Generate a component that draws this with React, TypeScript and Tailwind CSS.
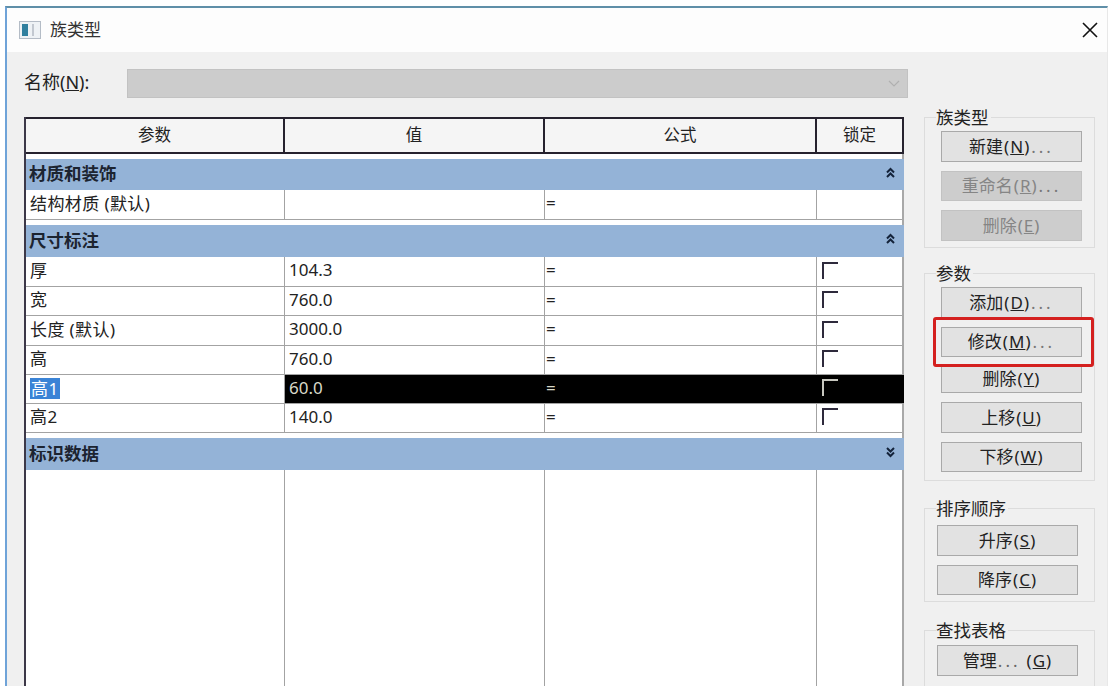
import React from "react";

const font = { fontFamily: '"Noto Sans", "Noto Sans CJK SC", sans-serif' };

const Shortcut = ({ k }: { k: string }) => (
  <span className="tracking-[1px] ml-[1px]">
    (<u>{k}</u>)
  </span>
);

const DialogButton = ({
  label,
  k,
  dots,
  disabled,
  dotsFirst,
  className = "h-[30.5px]",
}: {
  label: string;
  k: string;
  dots?: boolean;
  disabled?: boolean;
  dotsFirst?: boolean;
  className?: string;
}) => (
  <div
    className={`${className} flex items-center justify-center border text-[17px] leading-none ${
      disabled
        ? "bg-[#cdcdcd] border-[#c2c2c2] text-[#858585]"
        : "bg-[#e2e2e2] border-[#a9a9a9] text-[#222222]"
    }`}
  >
    {label}
    {dotsFirst && <span className="tracking-[3px] text-[#666666] ml-[1px] mr-[5px]">...</span>}
    <Shortcut k={k} />
    {dots && <span className="tracking-[3px] text-[#777777] ml-[1px]">...</span>}
  </div>
);

const GroupBox = ({
  title,
  className,
  children,
}: {
  title: string;
  className: string;
  children: React.ReactNode;
}) => (
  <div className={`border border-[#dcdcdc] ${className}`}>
    <div className="-mt-[10px] ml-[11px] w-fit bg-[#f0f0f0] pr-[2px] text-[17.5px] leading-[18px] text-[#222222]">
      {title}
    </div>
    {children}
  </div>
);

const Chevrons = ({ down }: { down?: boolean }) => (
  <svg width="9" height="12" viewBox="0 0 9 12" className={down ? "rotate-180" : ""}>
    <path d="M1 5.5 4.5 2 8 5.5M1 10 4.5 6.5 8 10" fill="none" stroke="#14233a" strokeWidth="2" />
  </svg>
);

const GroupRow = ({ title, down, h }: { title: string; down?: boolean; h: string }) => (
  <div className={`${h} -mr-[2px] bg-[#94b3d7] flex items-center justify-between pl-[3px] pr-[9px]`}>
    <span className="text-[17.5px] font-bold text-[#1c2430] pb-[2px]">{title}</span>
    <span className="pb-[4px]">
      <Chevrons down={down} />
    </span>
  </div>
);

const Row = ({
  name,
  value,
  lock,
  selected,
  height,
}: {
  name: string;
  value: string;
  lock?: boolean;
  selected?: boolean;
  height: string;
}) => (
  <div
    className={`${height} grid grid-cols-[259px_260px_272px_1fr] grid-rows-[minmax(0,1fr)] border-b border-[#a3a3a3] text-[17px] leading-[20px] text-[#222222] ${
      selected ? "-mr-[2px]" : ""
    }`}
  >
    <div className="flex items-center pl-[4px] pb-[2px] tracking-[0.4px] border-r border-[#a3a3a3] bg-white">
      {selected ? <span className="bg-[#3a83d6] text-white h-[21px] leading-[21px] px-[1px]">{name}</span> : name}
    </div>
    <div
      className={`flex items-center pl-[4px] pb-[3px] border-r ${
        selected ? "bg-black text-[#d8d8c8] border-black" : "bg-white border-[#a3a3a3]"
      }`}
    >
      {value}
    </div>
    <div
      className={`flex items-center pl-[1px] pb-[3px] border-r ${
        selected ? "bg-black text-[#d8d8c8] border-black" : "bg-white border-[#a3a3a3]"
      }`}
    >
      =
    </div>
    <div className={`flex items-center pl-[5px] pb-[3px] ${selected ? "bg-black" : "bg-white"}`}>
      {lock && (
        <div className={`w-[16px] h-[17px] border-l-2 border-t-2 ${selected ? "border-[#c8c8c0]" : "border-[#2e2a3c]"}`} />
      )}
    </div>
  </div>
);

const HeaderCell = ({ text, last }: { text: string; last?: boolean }) => (
  <div className={`flex items-center justify-center ${last ? "" : "border-r-2 border-[#26222e]"}`}>{text}</div>
);

export default function App() {
  return (
    <div className="w-[1110px] h-[686px] overflow-hidden bg-white pt-[6px] pl-[5px] pr-[2px]" style={font}>
      <div className="h-[700px] border-l-2 border-t-2 border-l-[#6fa3d8] border-t-[#5f8fa8] border-r border-r-[#e8e8e8] bg-[#f0f0f0]">
        {/* title bar */}
        <div className="h-[44px] bg-[#fdfdfd] flex items-center pl-[12px] pr-[9px]">
          <svg width="22" height="18" viewBox="0 0 22 18">
            <rect x="0.5" y="0.5" width="21" height="17" fill="#eef2f5" stroke="#b4bcc6" />
            <rect x="3" y="3" width="6" height="12" fill="#2f7f9e" />
            <path d="M14 3v12" stroke="#c2c8d0" strokeWidth="2" />
          </svg>
          <span className="ml-[9px] text-[17px] text-[#333333]">族类型</span>
          <svg width="16" height="16" viewBox="0 0 16 16" className="ml-auto">
            <path d="M1 1l14 14M15 1 1 15" stroke="#111111" strokeWidth="1.6" />
          </svg>
        </div>

        <div className="pl-[17px]">
          {/* name row */}
          <div className="mt-[17px] h-[29px] flex items-center">
            <span className="w-[103px] text-[18px] text-[#222222] pb-[2px]">
              名称(<u>N</u>):
            </span>
            <div className="w-[781px] h-full bg-[#cccccc] border border-[#c2c2c2] flex items-center justify-end pr-[7px]">
              <svg width="12" height="7" viewBox="0 0 12 7">
                <path d="M1 1l5 5 5-5" fill="none" stroke="#b0b0b0" strokeWidth="1.2" />
              </svg>
            </div>
          </div>

          <div className="flex mt-[19px]">
            {/* parameter table */}
            <div className="w-[880px] shrink-0 h-[570px] flex flex-col border-l-2 border-[#3c3848] text-[#222222]">
              <div className="h-[37px] shrink-0 grid grid-cols-[259px_260px_272px_85px] bg-[#f5f5f5] border-t-2 border-b-2 border-r-2 border-[#26222e] text-[16.5px]">
                <HeaderCell text="参数" />
                <HeaderCell text="值" />
                <HeaderCell text="公式" />
                <HeaderCell text="锁定" last />
              </div>
              <div className="flex flex-col flex-1 border-r-2 border-[#a8a8a8] pt-[5px] bg-white">
                <GroupRow title="材质和装饰" h="h-[31px] shrink-0" />
                <Row name="结构材质 (默认)" value="" height="h-[30px] shrink-0" />
                <div className="h-[5px] shrink-0" />
                <GroupRow title="尺寸标注" h="h-[32px] shrink-0" />
                <Row name="厚" value="104.3" lock height="h-[30px] shrink-0" />
                <Row name="宽" value="760.0" lock height="h-[29px] shrink-0" />
                <Row name="长度 (默认)" value="3000.0" lock height="h-[30px] shrink-0" />
                <Row name="高" value="760.0" lock height="h-[29px] shrink-0" />
                <Row name="高1" value="60.0" lock selected height="h-[29px] shrink-0" />
                <Row name="高2" value="140.0" lock height="h-[29px] shrink-0" />
                <div className="h-[5px] shrink-0" />
                <GroupRow title="标识数据" down h="h-[32px] shrink-0" />
                <div className="flex-1 grid grid-cols-[259px_260px_272px_1fr]">
                  <div className="border-r border-[#a3a3a3]" />
                  <div className="border-r border-[#a3a3a3]" />
                  <div className="border-r border-[#a3a3a3]" />
                  <div />
                </div>
              </div>
            </div>

            {/* side buttons */}
            <div className="w-[171px] ml-[20px] shrink-0 flex flex-col">
              <GroupBox title="族类型" className="h-[131px]">
                <div className="flex flex-col gap-[9px] pl-[16px] pr-[12px] mt-[5px]">
                  <DialogButton label="新建" k="N" dots />
                  <DialogButton label="重命名" k="R" dots disabled />
                  <DialogButton label="删除" k="E" disabled />
                </div>
              </GroupBox>
              <GroupBox title="参数" className="h-[208px] mt-[25px] relative">
                <div className="flex flex-col gap-[9px] pl-[16px] pr-[12px] mt-[5px]">
                  <DialogButton label="添加" k="D" dots />
                  <DialogButton label="修改" k="M" dots />
                  <DialogButton label="删除" k="Y" className="h-[29px] -mt-[2px]" />
                  <DialogButton label="上移" k="U" />
                  <DialogButton label="下移" k="W" />
                </div>
                <div className="absolute left-[8px] top-[43px] w-[161px] h-[50px] border-[3px] border-[#d4201f] rounded-[3px]" />
              </GroupBox>
              <GroupBox title="排序顺序" className="h-[94px] mt-[27px]">
                <div className="flex flex-col gap-[9px] pl-[12px] pr-[16px] mt-[8px]">
                  <DialogButton label="升序" k="S" />
                  <DialogButton label="降序" k="C" />
                </div>
              </GroupBox>
              <GroupBox title="查找表格" className="h-[80px] mt-[28px]">
                <div className="flex flex-col gap-[9px] pl-[12px] pr-[16px] mt-[6px]">
                  <DialogButton label="管理" k="G" dotsFirst />
                </div>
              </GroupBox>
            </div>
          </div>
        </div>
      </div>
    </div>
  );
}
